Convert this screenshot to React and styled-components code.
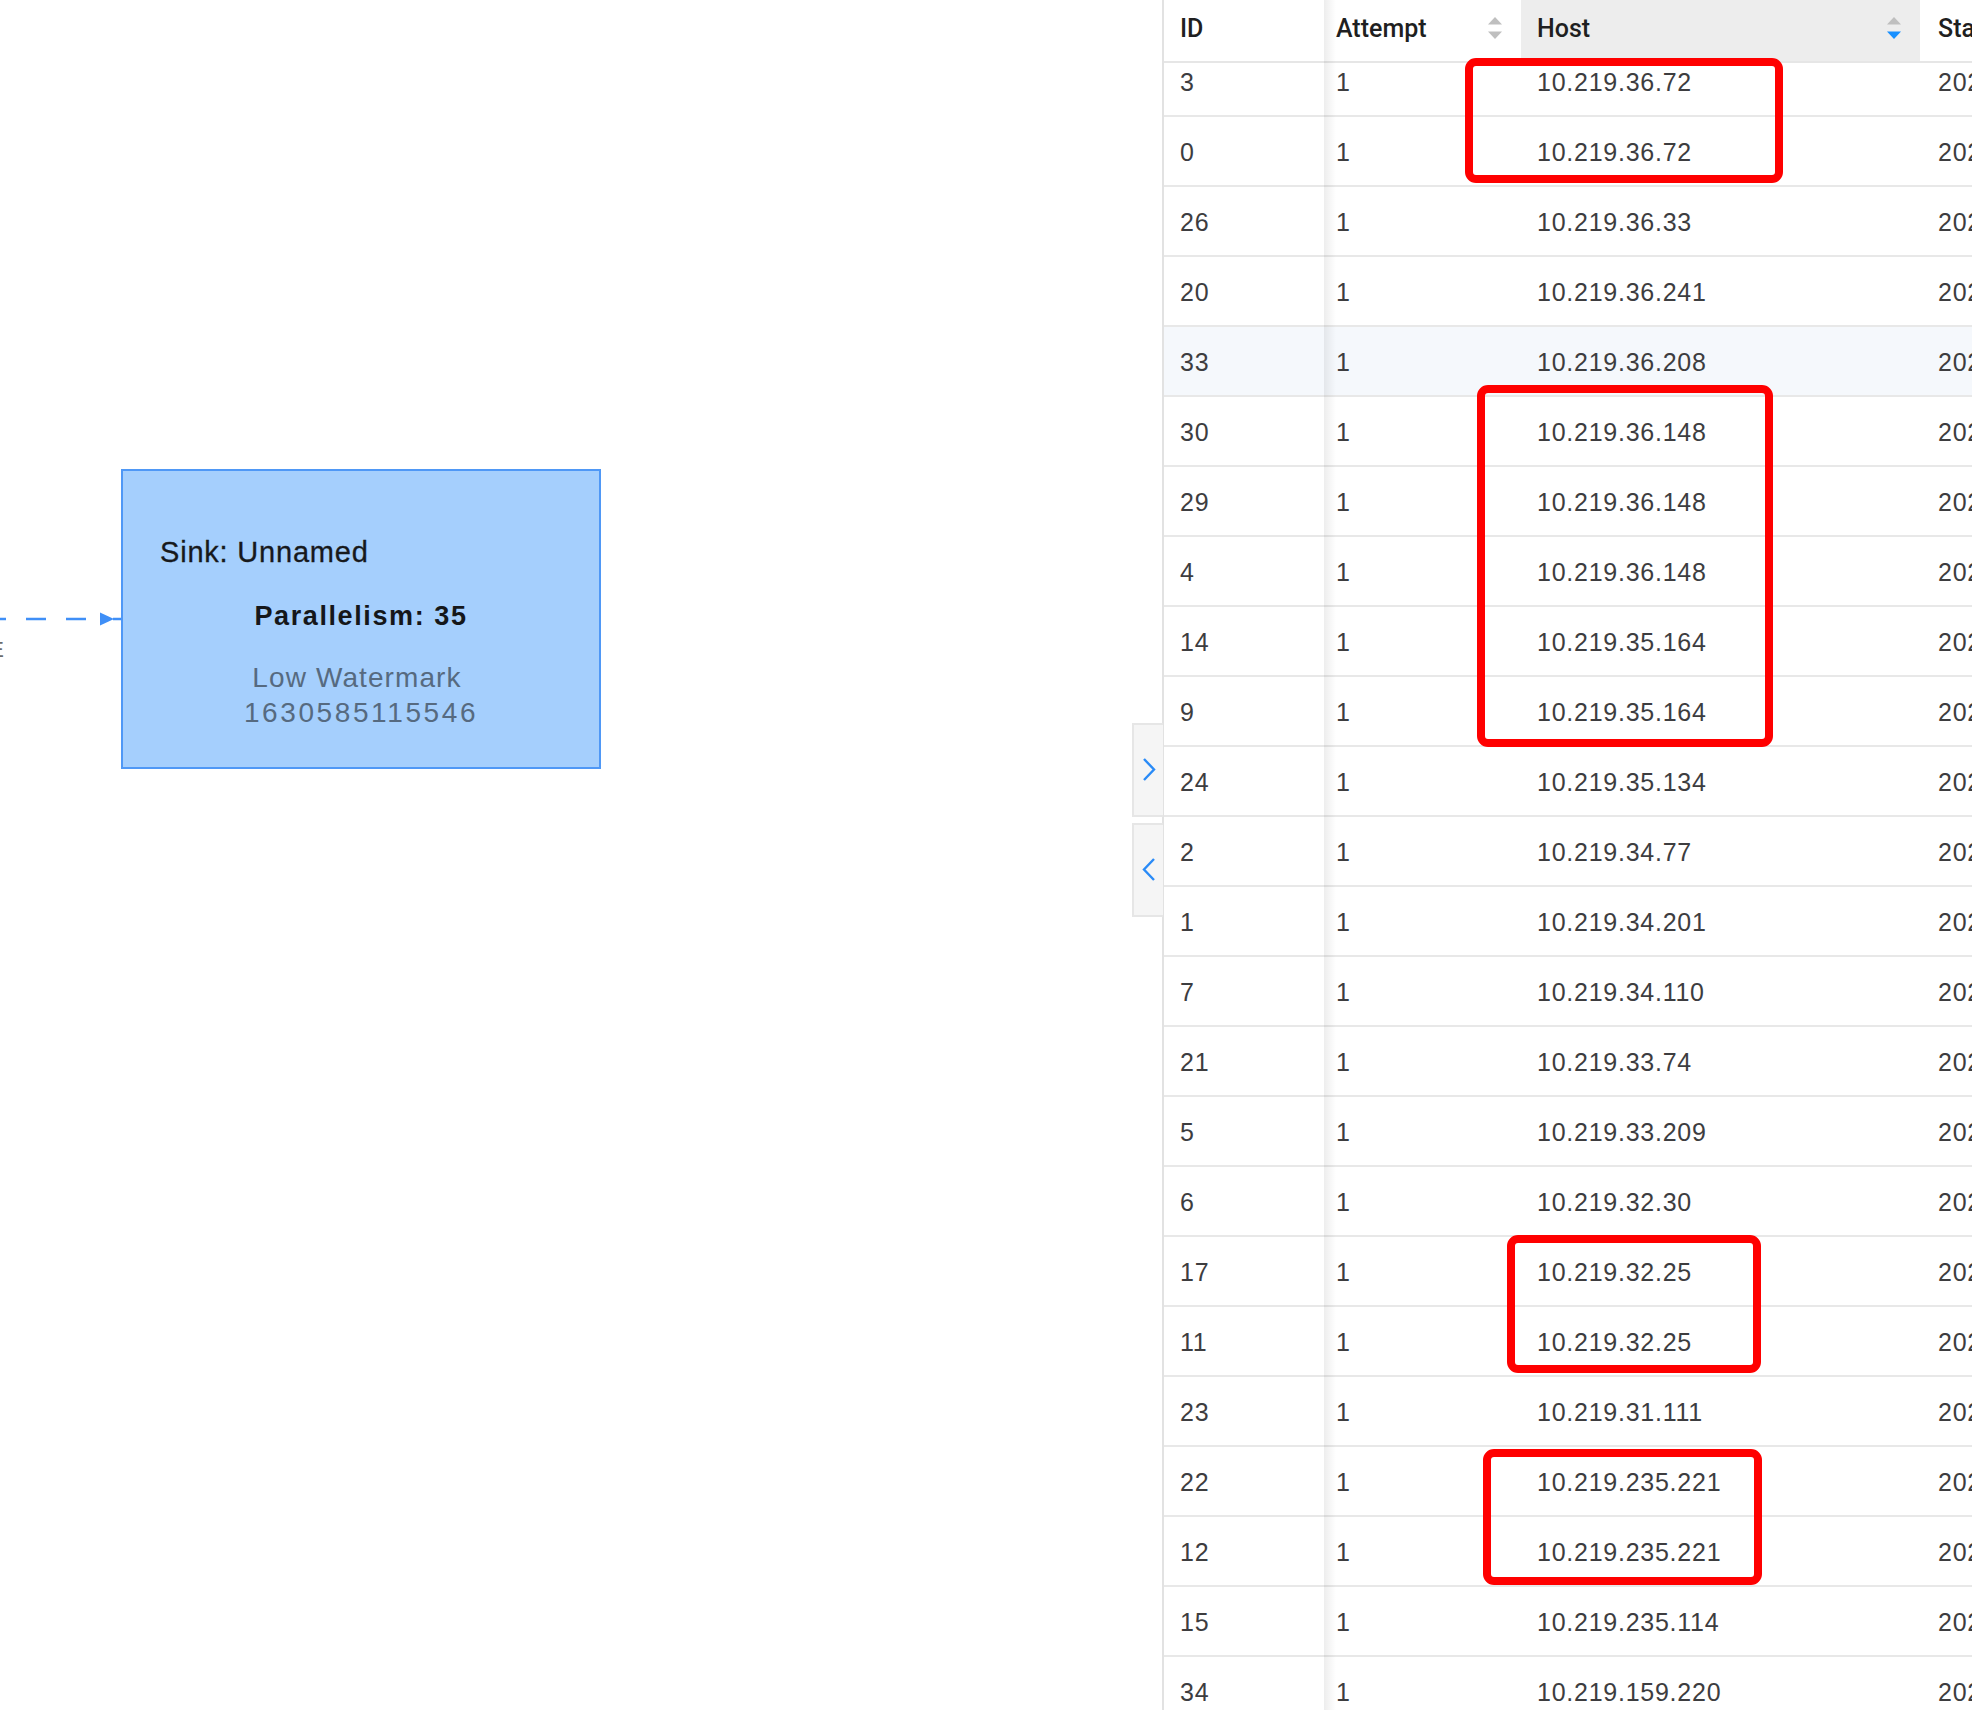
import React, { useLayoutEffect, useRef } from "react";
import styled, { createGlobalStyle } from "styled-components";

const Global = createGlobalStyle`
  html, body { margin: 0; padding: 0; background: #fff; }
  body { overflow: hidden; font-family: "Liberation Sans", Arial, sans-serif; }
  * { box-sizing: border-box; }
`;

const Page = styled.div`
  position: relative;
  display: flex;
  width: 1972px;
  height: 1710px;
  overflow: hidden;
  background: #fff;
`;

/* ---------- graph canvas ---------- */
const Canvas = styled.div`
  position: relative;
  flex: 0 0 1162px;
  height: 100%;
  overflow: hidden;
`;

const EdgeSvg = styled.svg`
  position: absolute;
  left: 0;
  top: 609px;
`;

const EdgeLabel = styled.span`
  position: absolute;
  right: calc(100% - 4px);
  top: 638px;
  font: 22px/24px "Liberation Sans", Arial, sans-serif;
  color: #6b6b6b;
  white-space: nowrap;
`;

const Node = styled.div`
  position: absolute;
  left: 121px;
  top: 469px;
  width: 480px;
  height: 300px;
  background: #a5cffd;
  border: 2px solid #4f98f6;
  padding-top: 63px;
  display: flex;
  flex-direction: column;
  font-family: "Liberation Sans", Arial, sans-serif;
`;

const NodeTitle = styled.div`
  padding-left: 37px;
  font-size: 29px;
  line-height: 36px;
  letter-spacing: 0.8px;
  color: #17191c;
  -webkit-text-stroke: 0.3px #17191c;
`;

const NodeParallelism = styled.div`
  margin-top: 29px;
  text-align: center;
  font-size: 27px;
  line-height: 34px;
  font-weight: 700;
  letter-spacing: 1.6px;
  color: #15171a;
`;

const Watermark = styled.div`
  margin-top: 27px;
  display: flex;
  flex-direction: column;
  align-items: center;
  font-size: 28px;
  line-height: 35px;
  color: #566a80;
`;

const WatermarkLine = styled.span`
  letter-spacing: ${(p) => p.$spacing}px;
  margin-right: ${(p) => p.$shift}px;
`;

/* ---------- task table panel ---------- */
const Panel = styled.section`
  position: relative;
  flex: 1;
  min-width: 0;
  height: 100%;
  border-left: 2px solid #e2e2e2;
`;

const TableClip = styled.div`
  height: 100%;
  overflow: hidden;
  display: flex;
  flex-direction: column;
`;

const COLS = "160px 197px 399px 340px";

const HeaderRow = styled.div`
  display: grid;
  grid-template-columns: ${COLS};
  flex: 0 0 63px;
  border-bottom: 2px solid #e6e6e6;
  background: #fff;
`;

const fixedShadow = `
  &::after {
    content: "";
    position: absolute;
    top: 0;
    bottom: -2px;
    right: -12px;
    width: 12px;
    background: linear-gradient(to right, rgba(0,0,0,0.07), rgba(0,0,0,0));
    z-index: 2;
  }
`;

const HeaderCell = styled.div`
  display: flex;
  align-items: center;
  justify-content: space-between;
  padding: 0 18px 4px ${(p) => p.$pad}px;
  height: 61px;
  white-space: nowrap;
  overflow: ${(p) => (p.$fixed ? "visible" : "hidden")};
  position: ${(p) => (p.$fixed ? "relative" : "static")};
  background: ${(p) => (p.$sorted ? "#ededed" : "#fff")};
  font-family: Roboto, "Liberation Sans", Arial, sans-serif;
  font-weight: 500;
  font-size: 25px;
  color: #1f1f21;
  ${(p) => p.$fixed && fixedShadow}
`;

const Body = styled.div`
  flex: 1;
  overflow-y: auto;
  scrollbar-width: none;
  &::-webkit-scrollbar { display: none; }
`;

const Row = styled.div`
  display: grid;
  grid-template-columns: ${COLS};
  height: 70px;
  border-bottom: 2px solid #e8e8e8;
  background: ${(p) => (p.$hover ? "#f5f8fc" : "#fff")};
`;

const Cell = styled.div`
  display: flex;
  align-items: center;
  padding: 2px 16px 0 ${(p) => p.$pad}px;
  white-space: nowrap;
  overflow: ${(p) => (p.$fixed ? "visible" : "hidden")};
  position: ${(p) => (p.$fixed ? "relative" : "static")};
  font-family: "Liberation Sans", Arial, sans-serif;
  font-size: 25px;
  letter-spacing: 0.75px;
  color: #3d3d3f;
  ${(p) => p.$fixed && fixedShadow}
`;

const Handles = styled.div`
  position: absolute;
  left: -32px;
  top: 723px;
  display: flex;
  flex-direction: column;
  gap: 6px;
  z-index: 3;
`;

const HandleButton = styled.button`
  width: 31px;
  height: 94px;
  padding: 0;
  display: flex;
  align-items: center;
  justify-content: center;
  background: #f5f5f5;
  border: 2px solid #e6e6e6;
  border-right: none;
  cursor: pointer;
`;

const Annotation = styled.div`
  position: absolute;
  left: ${(p) => p.$l}px;
  top: ${(p) => p.$t}px;
  width: ${(p) => p.$w}px;
  height: ${(p) => p.$h}px;
  border: 8px solid #ff0000;
  border-radius: 11px;
  pointer-events: none;
  z-index: 10;
`;

const Sorter = ({ active }) => (
  <svg width="16" height="25" viewBox="0 0 16 25" aria-hidden="true">
    <path d="M8 1 L15 8.5 H1 Z" fill={active === "up" ? "#1890ff" : "#bfbfbf"} />
    <path d="M1 15.5 H15 L8 23 Z" fill={active === "down" ? "#1890ff" : "#bfbfbf"} />
  </svg>
);

const Chevron = ({ dir }) => (
  <svg width="16" height="26" viewBox="0 0 16 26" aria-hidden="true">
    <polyline
      points={dir === "right" ? "3,2 13,12.5 3,23" : "13,2 3,12.5 13,23"}
      fill="none"
      stroke="#2a8bf7"
      strokeWidth="2.4"
      strokeLinejoin="miter"
    />
  </svg>
);

const rows = [
  [3, "10.219.36.72"],
  [0, "10.219.36.72"],
  [26, "10.219.36.33"],
  [20, "10.219.36.241"],
  [33, "10.219.36.208"],
  [30, "10.219.36.148"],
  [29, "10.219.36.148"],
  [4, "10.219.36.148"],
  [14, "10.219.35.164"],
  [9, "10.219.35.164"],
  [24, "10.219.35.134"],
  [2, "10.219.34.77"],
  [1, "10.219.34.201"],
  [7, "10.219.34.110"],
  [21, "10.219.33.74"],
  [5, "10.219.33.209"],
  [6, "10.219.32.30"],
  [17, "10.219.32.25"],
  [11, "10.219.32.25"],
  [23, "10.219.31.111"],
  [22, "10.219.235.221"],
  [12, "10.219.235.221"],
  [15, "10.219.235.114"],
  [34, "10.219.159.220"],
  [8, "10.219.159.101"],
  [10, "10.219.158.47"],
];

const annotations = [
  { l: 1465, t: 58, w: 318, h: 125 },
  { l: 1477, t: 385, w: 296, h: 362 },
  { l: 1507, t: 1235, w: 254, h: 138 },
  { l: 1483, t: 1449, w: 279, h: 136 },
];

export default function App() {
  const bodyRef = useRef(null);
  useLayoutEffect(() => {
    if (bodyRef.current) bodyRef.current.scrollTop = 16;
  }, []);

  return (
    <Page>
      <Global />
      <Canvas>
        <EdgeSvg width="122" height="20" viewBox="0 0 122 20">
          <line
            x1="0"
            y1="10"
            x2="100"
            y2="10"
            stroke="#3f8ff7"
            strokeWidth="2.5"
            strokeDasharray="20 20"
            strokeDashoffset="14"
          />
          <path d="M100 3.5 L114 10 L100 16.5 Z" fill="#3f8ff7" />
          <line x1="113" y1="10" x2="122" y2="10" stroke="#3f8ff7" strokeWidth="2.5" />
        </EdgeSvg>
        <EdgeLabel>REBALANCE</EdgeLabel>
        <Node>
          <NodeTitle>Sink: Unnamed</NodeTitle>
          <NodeParallelism>Parallelism: 35</NodeParallelism>
          <Watermark>
            <WatermarkLine $spacing={1.1} $shift={8}>Low Watermark</WatermarkLine>
            <WatermarkLine $spacing={2.6} $shift={0}>1630585115546</WatermarkLine>
          </Watermark>
        </Node>
      </Canvas>

      <Panel>
        <Handles>
          <HandleButton aria-label="expand">
            <Chevron dir="right" />
          </HandleButton>
          <HandleButton aria-label="collapse">
            <Chevron dir="left" />
          </HandleButton>
        </Handles>
        <TableClip>
          <HeaderRow>
            <HeaderCell $fixed $pad={16}>ID</HeaderCell>
            <HeaderCell $pad={12}>
              Attempt
              <Sorter />
            </HeaderCell>
            <HeaderCell $sorted $pad={16}>
              Host
              <Sorter active="down" />
            </HeaderCell>
            <HeaderCell $pad={18}>Start Time</HeaderCell>
          </HeaderRow>
          <Body ref={bodyRef}>
            {rows.map(([id, host]) => (
              <Row key={id} $hover={id === 33}>
                <Cell $fixed $pad={16}>{id}</Cell>
                <Cell $pad={12}>1</Cell>
                <Cell $pad={16}>{host}</Cell>
                <Cell $pad={18}>2021-09-02 19:41:25</Cell>
              </Row>
            ))}
          </Body>
        </TableClip>
      </Panel>

      {annotations.map((a, i) => (
        <Annotation key={i} $l={a.l} $t={a.t} $w={a.w} $h={a.h} />
      ))}
    </Page>
  );
}
